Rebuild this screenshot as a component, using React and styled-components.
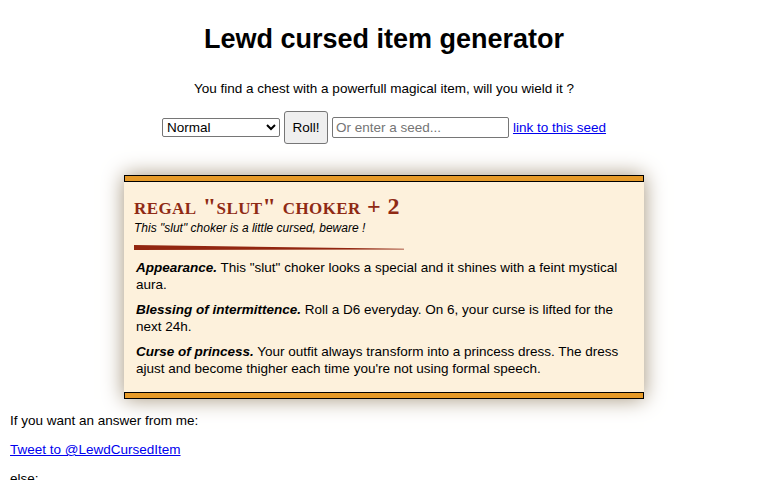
import React from "react";
import styled, { createGlobalStyle } from "styled-components";

const GlobalStyle = createGlobalStyle`
  body {
    margin: 0;
    background: #fff;
    font-family: "Liberation Sans", Arial, sans-serif;
    color: #000;
  }
`;

const Page = styled.div`
  padding: 0 10px;
`;

const Title = styled.h1`
  margin: 24px 0 0;
  text-align: center;
  font-size: 27px;
  font-weight: bold;
`;

const Intro = styled.p`
  margin: 26px 0 0;
  text-align: center;
  font-size: 13.5px;
`;

const Controls = styled.div`
  display: flex;
  justify-content: center;
  align-items: center;
  gap: 4px;
  margin-top: 15px;
  font-size: 13.5px;
`;

const Select = styled.select`
  width: 118px;
  height: 19px;
  font-family: "Liberation Sans", Arial, sans-serif;
  font-size: 13.5px;
  padding: 0;
  border: 1px solid #767676;
  border-radius: 2px;
  background: #fff;
`;

const RollButton = styled.button`
  width: 44px;
  height: 33px;
  font-family: "Liberation Sans", Arial, sans-serif;
  font-size: 13.5px;
  background: #efefef;
  border: 1px solid #767676;
  border-radius: 3px;
  padding: 0;
`;

const SeedInput = styled.input`
  width: 177px;
  height: 21px;
  box-sizing: border-box;
  font-family: "Liberation Sans", Arial, sans-serif;
  font-size: 13.5px;
  border: 1px solid #767676;
  border-radius: 2px;
  padding: 1px 3px;
  &::placeholder {
    color: #757575;
  }
`;

const Link = styled.a`
  color: #0000ee;
  text-decoration: underline;
  font-size: 13.5px;
`;

const StatBlock = styled.div`
  width: 520px;
  margin: 31px auto 0;
  background: #fdf1dc;
  box-shadow: 0 0 20px #a3937a;
`;

const OrangeBar = styled.div`
  height: 7px;
  background: #e69a28;
  border: 1px solid #000;
  box-sizing: border-box;
`;

const Body = styled.div`
  padding: 10px 10px 15px;
`;

const ItemName = styled.h2`
  margin: 0;
  font-family: "Liberation Serif", "Times New Roman", serif;
  font-variant: small-caps;
  font-weight: bold;
  font-size: 24px;
  letter-spacing: 0.4px;
  line-height: 28px;
  color: #8f2a14;
`;

const Tagline = styled.div`
  font-style: italic;
  font-size: 12px;
  margin-top: 1px;
`;

const Rule = styled.svg`
  display: block;
  margin: 10px 0 10px;
`;

const Property = styled.p`
  margin: 0 0 9px 2px;
  font-size: 13.5px;
  line-height: 16.5px;
  &:last-child {
    margin-bottom: 0;
  }
  b {
    font-style: italic;
  }
`;

const Footer = styled.div`
  margin-top: 14px;
  font-size: 13.5px;
  p {
    margin: 0 0 14px;
  }
`;

const properties = [
  {
    name: "Appearance.",
    text: ' This "slut" choker looks a special and it shines with a feint mystical aura.',
  },
  {
    name: "Blessing of intermittence.",
    text: " Roll a D6 everyday. On 6, your curse is lifted for the next 24h.",
  },
  {
    name: "Curse of princess.",
    text: " Your outfit always transform into a princess dress. The dress ajust and become thigher each time you're not using formal speech.",
  },
];

export default function App() {
  return (
    <Page>
      <GlobalStyle />
      <Title>Lewd cursed item generator</Title>
      <Intro>You find a chest with a powerfull magical item, will you wield it ?</Intro>
      <Controls>
        <Select defaultValue="normal">
          <option value="normal">Normal</option>
        </Select>
        <RollButton>Roll!</RollButton>
        <SeedInput placeholder="Or enter a seed..." />
        <Link href="#">link to this seed</Link>
      </Controls>

      <StatBlock>
        <OrangeBar />
        <Body>
          <ItemName>regal "slut" choker + 2</ItemName>
          <Tagline>This "slut" choker is a little cursed, beware !</Tagline>
          {/* tapered red rule under the item header */}
          <Rule width="270" height="5" viewBox="0 0 270 5">
            <polygon points="0,0 270,3.8 270,4.6 0,5" fill="#922610" />
          </Rule>
          {properties.map((p) => (
            <Property key={p.name}>
              <b>{p.name}</b>
              {p.text}
            </Property>
          ))}
        </Body>
        <OrangeBar />
      </StatBlock>

      <Footer>
        <p>If you want an answer from me:</p>
        <p>
          <Link href="#">Tweet to @LewdCursedItem</Link>
        </p>
        <p>else:</p>
      </Footer>
    </Page>
  );
}
